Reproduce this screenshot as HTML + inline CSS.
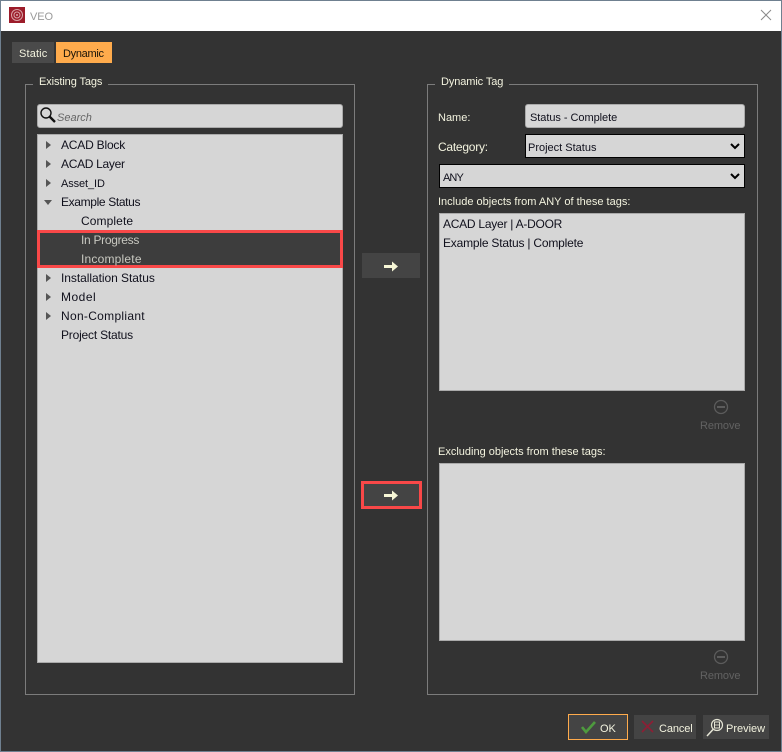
<!DOCTYPE html>
<html><head><meta charset="utf-8"><style>
html,body{margin:0;padding:0}
body{width:782px;height:752px;position:relative;overflow:hidden;background:#333;font:12px/16px "Liberation Sans",sans-serif;color:#f3f3df}
.a{position:absolute;box-sizing:border-box}
.t{position:absolute;white-space:nowrap}
.s{font-size:11px;margin-top:1px}
.box{position:absolute;box-sizing:border-box;background:#d6d6d6;border:1px solid #aaa}
.d{color:#10101c}
.g{position:absolute;box-sizing:border-box;border:1px solid #7c7c7c}
.leg{position:absolute;background:#333;padding:1px 6px 0;white-space:nowrap;height:15px;font-size:11px}
.tri{position:absolute;width:0;height:0;border-left:5px solid #555;border-top:4px solid transparent;border-bottom:4px solid transparent;left:46px}
.btn{position:absolute;box-sizing:border-box;background:#444}
.sel{position:absolute;box-sizing:border-box;background:#d6d6d6;border:1px solid #000;color:#10101c}
</style></head><body>
<div class="a" style="left:0;top:0;width:782px;height:752px;border:1px solid #6f8090;z-index:9;pointer-events:none"></div>
<div class="a" style="left:0;top:0;width:782px;height:31px;background:#fff"></div>
<svg class="a" style="left:9px;top:7px" width="16" height="16" viewBox="0 0 16 16"><rect width="16" height="16" fill="#9c1c2a"/><circle cx="8" cy="8" r="5.5" fill="none" stroke="#d9a5a8" stroke-width="1"/><circle cx="8" cy="8" r="3" fill="none" stroke="#d9a5a8" stroke-width="1"/><circle cx="8" cy="8" r="1" fill="#d9a5a8"/></svg>
<div class="t s" style="left:30px;top:8px;color:#9a9a9a;letter-spacing:-.1px">VEO</div>
<svg class="a" style="left:760px;top:9px" width="12" height="12" viewBox="0 0 12 12"><path d="M1 1L11 11M11 1L1 11" stroke="#8a8a8a" stroke-width="1"/></svg>

<div class="a" style="left:12px;top:42px;width:42px;height:21px;background:#4a4a4a"></div>
<div class="t s" style="left:19px;top:45px;letter-spacing:.15px">Static</div>
<div class="a" style="left:56px;top:42px;width:56px;height:21px;background:#ffab4c"></div>
<div class="t s" style="left:63px;top:45px;color:#1a1408;letter-spacing:-.3px">Dynamic</div>

<div class="g" style="left:25px;top:84px;width:330px;height:611px"></div>
<div class="leg" style="left:33px;top:73px;letter-spacing:-.1px">Existing Tags</div>
<div class="box" style="left:37px;top:104px;width:306px;height:24px;border-radius:3px"></div>
<svg class="a" style="left:39px;top:106px" width="18" height="19" viewBox="0 0 18 19"><circle cx="7" cy="7" r="5" fill="none" stroke="#111" stroke-width="1.4"/><path d="M10.5 10.5L16 16" stroke="#111" stroke-width="2.4"/></svg>
<div class="t s" style="left:57px;top:109px;font-style:italic;color:#666">Search</div>

<div class="box" style="left:37px;top:134px;width:306px;height:529px"></div>
<div class="tri" style="top:141px"></div><div class="t d" style="left:61px;top:137px;letter-spacing:-.2px">ACAD Block</div>
<div class="tri" style="top:160px"></div><div class="t d" style="left:61px;top:156px;letter-spacing:-.3px">ACAD Layer</div>
<div class="tri" style="top:179px"></div><div class="t d s" style="left:61px;top:175px;letter-spacing:-.1px">Asset_ID</div>
<div class="a" style="left:44px;top:200px;width:0;height:0;border-top:5px solid #555;border-left:4px solid transparent;border-right:4px solid transparent"></div>
<div class="t d" style="left:61px;top:194px;letter-spacing:-.35px">Example Status</div>
<div class="t d" style="left:81px;top:213px;letter-spacing:.1px">Complete</div>
<div class="a" style="left:37px;top:230px;width:306px;height:38px;background:#3d3d3d;border:3px solid #f94848"></div>
<div class="t" style="left:81px;top:232px;color:#c8c8c0;letter-spacing:-.3px">In Progress</div>
<div class="t" style="left:81px;top:251px;color:#c8c8c0;letter-spacing:.2px">Incomplete</div>
<div class="tri" style="top:274px"></div><div class="t d" style="left:61px;top:270px;letter-spacing:-.05px">Installation Status</div>
<div class="tri" style="top:293px"></div><div class="t d" style="left:61px;top:289px;letter-spacing:.5px">Model</div>
<div class="tri" style="top:312px"></div><div class="t d" style="left:61px;top:308px;letter-spacing:.3px">Non-Compliant</div>
<div class="t d" style="left:61px;top:327px;letter-spacing:-.2px">Project Status</div>

<div class="btn" style="left:362px;top:253px;width:58px;height:25px"></div>
<svg class="a" style="left:384px;top:260px" width="15" height="13" viewBox="0 0 15 13"><path d="M0 5H8V1.500L14 6.500L8 11.500V8H0Z" fill="#f6f6d6"/></svg>
<div class="btn" style="left:361px;top:481px;width:61px;height:28px;border:3px solid #f94848"></div>
<svg class="a" style="left:384px;top:489px" width="15" height="13" viewBox="0 0 15 13"><path d="M0 5H8V1.500L14 6.500L8 11.500V8H0Z" fill="#f6f6d6"/></svg>

<div class="g" style="left:427px;top:84px;width:331px;height:611px"></div>
<div class="leg" style="left:435px;top:73px;letter-spacing:-.1px">Dynamic Tag</div>
<div class="t s" style="left:438px;top:109px">Name:</div>
<div class="box" style="left:525px;top:104px;width:220px;height:24px;border-radius:3px"></div>
<div class="t d s" style="left:530px;top:109px;letter-spacing:-.05px">Status - Complete</div>
<div class="t" style="left:438px;top:139px;letter-spacing:-.25px">Category:</div>
<div class="sel" style="left:525px;top:134px;width:220px;height:24px"></div>
<div class="t d s" style="left:528px;top:139px">Project Status</div>
<svg class="a" style="left:730px;top:143px" width="10" height="7" viewBox="0 0 10 7"><path d="M1 1L5 5L9 1" fill="none" stroke="#000" stroke-width="2"/></svg>
<div class="sel" style="left:439px;top:164px;width:306px;height:24px"></div>
<div class="t d s" style="left:443px;top:169px;letter-spacing:-.9px">ANY</div>
<svg class="a" style="left:730px;top:173px" width="10" height="7" viewBox="0 0 10 7"><path d="M1 1L5 5L9 1" fill="none" stroke="#000" stroke-width="2"/></svg>
<div class="t s" style="left:438px;top:193px">Include objects from ANY of these tags:</div>
<div class="box" style="left:439px;top:213px;width:306px;height:178px"></div>
<div class="t d" style="left:443px;top:216px;letter-spacing:-.25px">ACAD Layer | A-DOOR</div>
<div class="t d" style="left:443px;top:235px;letter-spacing:-.2px">Example Status | Complete</div>
<svg class="a" style="left:713px;top:399px" width="16" height="16" viewBox="0 0 16 16"><circle cx="8" cy="8" r="6.500" fill="none" stroke="#5c5c5c" stroke-width="1.300"/><path d="M4 8H12" stroke="#5c5c5c" stroke-width="2"/></svg>
<div class="t s" style="left:700px;top:417px;color:#626262;letter-spacing:-.1px">Remove</div>
<div class="t s" style="left:438px;top:443px">Excluding objects from these tags:</div>
<div class="box" style="left:439px;top:463px;width:306px;height:178px"></div>
<svg class="a" style="left:713px;top:649px" width="16" height="16" viewBox="0 0 16 16"><circle cx="8" cy="8" r="6.500" fill="none" stroke="#5c5c5c" stroke-width="1.300"/><path d="M4 8H12" stroke="#5c5c5c" stroke-width="2"/></svg>
<div class="t s" style="left:700px;top:667px;color:#626262;letter-spacing:-.1px">Remove</div>

<div class="btn" style="left:568px;top:714px;width:60px;height:26px;border:1px solid #ffab4c"></div>
<svg class="a" style="left:581px;top:720px" width="15" height="14" viewBox="0 0 15 14"><path d="M1 7L5 12L14 2" fill="none" stroke="#4e9a3e" stroke-width="2.600"/></svg>
<div class="t s" style="left:600px;top:720px">OK</div>
<div class="btn" style="left:634px;top:715px;width:62px;height:24px"></div>
<svg class="a" style="left:641px;top:720px" width="13" height="13" viewBox="0 0 13 13"><path d="M1 1L12 12M12 1L1 12" stroke="#8c1f35" stroke-width="1.700"/></svg>
<div class="t s" style="left:659px;top:720px;letter-spacing:-.1px">Cancel</div>
<div class="btn" style="left:703px;top:715px;width:66px;height:24px"></div>
<svg class="a" style="left:706px;top:718px" width="19" height="19" viewBox="0 0 19 19"><circle cx="11" cy="7" r="5.500" fill="none" stroke="#e6e6d6" stroke-width="1.200"/><rect x="8.500" y="4" width="5" height="6" fill="none" stroke="#e6e6d6"/><path d="M8.500 7H13.500" stroke="#e6e6d6" stroke-width=".8"/><path d="M7 11.500L1 18" stroke="#e6e6d6" stroke-width="1.500"/></svg>
<div class="t s" style="left:726px;top:720px">Preview</div>
</body></html>
